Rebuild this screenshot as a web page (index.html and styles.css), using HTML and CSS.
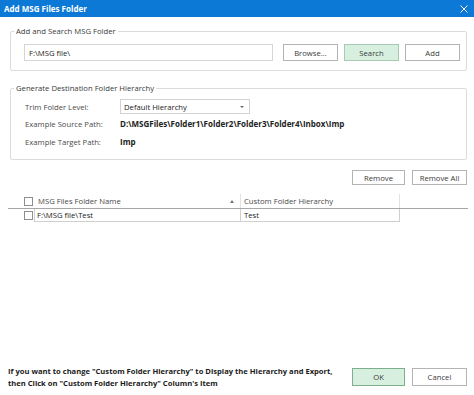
FILE: index.html
```html
<!DOCTYPE html>
<html>
<head>
<meta charset="utf-8">
<link rel="stylesheet" href="styles.css">
</head>
<body>
<div class="dialog">
  <div class="titlebar">
    <span class="title">Add MSG Files Folder</span>
    <svg class="close" width="8" height="8" viewBox="0 0 8 8"><path d="M0.5 0.5 L7.5 7.5 M7.5 0.5 L0.5 7.5" stroke="#fff" stroke-width="1" fill="none"/></svg>
  </div>
  <div class="body">
    <fieldset class="group g1">
      <legend>Add and Search MSG Folder</legend>
      <div class="search-row">
        <div class="input">F:\MSG file\</div>
        <button class="btn">Browse...</button>
        <button class="btn green">Search</button>
        <button class="btn">Add</button>
      </div>
    </fieldset>
    <fieldset class="group g2">
      <legend>Generate Destination Folder Hierarchy</legend>
      <div class="form">
        <div class="frow r1"><span class="lbl">Trim Folder Level:</span><div class="select"><span>Default Hierarchy</span><svg class="caret" width="4" height="2" viewBox="0 0 4 2"><path d="M0 0 H4 L2 2 Z" fill="#666"/></svg></div></div>
        <div class="frow r2"><span class="lbl">Example Source Path:</span><span class="val">D:\MSGFiles\Folder1\Folder2\Folder3\Folder4\Inbox\Imp</span></div>
        <div class="frow r3"><span class="lbl">Example Target Path:</span><span class="val">Imp</span></div>
      </div>
    </fieldset>
    <div class="actions">
      <button class="btn small rm">Remove</button>
      <button class="btn small rma">Remove All</button>
    </div>
    <div class="table">
      <div class="thead">
        <div class="c0"><span class="chk"></span></div>
        <div class="c1 th"><span>MSG Files Folder Name</span><svg class="sort" width="4" height="3" viewBox="0 0 4 3"><path d="M0 3 H4 L2 0 Z" fill="#777"/></svg></div>
        <div class="c2 th">Custom Folder Hierarchy</div>
        <div class="c3"></div>
      </div>
      <div class="trow">
        <div class="c0"><span class="chk"></span></div>
        <div class="c1 td">F:\MSG file\Test</div>
        <div class="c2 td">Test</div>
        <div class="c3"></div>
      </div>
    </div>
    <div class="footer">
      <p class="note">If you want to change "Custom Folder Hierarchy" to Display the Hierarchy and Export,<br>then Click on "Custom Folder Hierarchy" Column's Item</p>
      <div class="footer-btns">
        <button class="btn big green ok">OK</button>
        <button class="btn big cancel">Cancel</button>
      </div>
    </div>
  </div>
</div>
</body>
</html>
```

FILE: styles.css
```css
html, body {
  margin: 0;
  padding: 0;
  background: #ffffff;
}
.dialog {
  width: 474px;
  height: 395px;
  display: flex;
  flex-direction: column;
  background: #ffffff;
  font-family: "Open Sans", "Noto Sans", sans-serif;
  font-size: 7.7px;
  color: #2b2b2b;
  overflow: hidden;
}
.titlebar {
  height: 17px;
  flex: none;
  background: #0c79d6;
  display: flex;
  align-items: center;
  justify-content: space-between;
  padding: 0 6px 0 4px;
}
.title {
  color: #ffffff;
  font-weight: 700;
  font-size: 8px;
}
.close { display: block; }
.body {
  flex: 1;
  display: flex;
  flex-direction: column;
  padding: 9px 7px 0 10px;
}
.group {
  margin: 0;
  padding: 0;
  border: 1px solid #dcdcdc;
  border-radius: 2px;
  min-width: 0;
}
.group legend {
  margin-left: 3px;
  padding: 0 2px;
  line-height: 11px;
  color: #3a3a3a;
}
.g1 .search-row {
  display: flex;
  align-items: center;
  padding: 7px 6px 9px 13px;
}
.input {
  width: 249px;
  height: 17px;
  box-sizing: border-box;
  border: 1px solid #d6d6d6;
  padding-left: 4px;
  display: flex;
  align-items: center;
  color: #222;
  margin-right: 10px;
}
.btn {
  font-family: inherit;
  font-size: 7.7px;
  color: #3a3a3a;
  background: #ffffff;
  border: 1px solid #b4b4b4;
  border-radius: 0;
  width: 55px;
  height: 17px;
  padding: 0;
  margin: 0;
  box-sizing: border-box;
}
.search-row .btn + .btn { margin-left: 6px; }
.btn.green {
  background: #d7efdf;
  border-color: #a8c9b3;
}
.g2 { margin-top: 12px; }
.form {
  padding: 5px 0 10px 14px;
  display: flex;
  flex-direction: column;
}
.frow {
  display: flex;
  align-items: center;
  height: 15px;
}
.r2 { margin-top: 2px; }
.r3 { margin-top: 3px; }
.lbl {
  width: 95px;
  color: #4a4a4a;
}
.val {
  font-weight: 700;
  font-size: 8px;
  color: #222;
}
.select {
  width: 130px;
  height: 15px;
  box-sizing: border-box;
  border: 1px solid #d2d2d2;
  display: flex;
  align-items: center;
  justify-content: space-between;
  padding: 0 5px 0 3px;
  color: #222;
}
.caret { display: block; }
.actions {
  display: flex;
  justify-content: flex-end;
  gap: 7px;
  margin-top: 10px;
}
.btn.small { height: 15px; }
.btn.rm { width: 53px; }
.btn.rma { width: 55px; }
.table {
  margin: 9px -1px 0 -2px;
}
.thead, .trow {
  display: grid;
  grid-template-columns: 26px 206px 160px 1fr;
}
.thead {
  height: 14px;
  border-bottom: 1px solid #a6a6a6;
}
.trow { height: 13px; }
.c0 {
  display: flex;
  align-items: center;
  padding-left: 16px;
}
.chk {
  width: 9px;
  height: 9px;
  box-sizing: border-box;
  border: 1px solid #8e8e8e;
  background: #fff;
}
.th {
  display: flex;
  align-items: center;
  color: #4a4a4a;
}
.c1.th {
  justify-content: space-between;
  padding: 0 6px 0 4px;
}
.sort { display: block; }
.c2.th {
  border-left: 1px solid #e2e2e2;
  border-right: 1px solid #e2e2e2;
  padding-left: 3px;
}
.td {
  display: flex;
  align-items: center;
  border-bottom: 1px solid #cfcfcf;
  color: #222;
}
.c1.td {
  border-left: 1px solid #cfcfcf;
  padding-left: 2px;
}
.c2.td {
  border-left: 1px solid #cfcfcf;
  border-right: 1px solid #cfcfcf;
  padding-left: 3px;
}
.footer {
  margin-top: auto;
  margin-left: -2px;
  display: flex;
  align-items: center;
  justify-content: space-between;
  padding-bottom: 6px;
}
.note {
  margin: 0;
  font-weight: 700;
  font-size: 7.6px;
  line-height: 12px;
  color: #1a1a1a;
}
.footer-btns {
  display: flex;
  gap: 7px;
}
.btn.big { height: 18px; }
.btn.ok { width: 53px; border-color: #7fae8f; }
.btn.cancel { width: 55px; }
```
